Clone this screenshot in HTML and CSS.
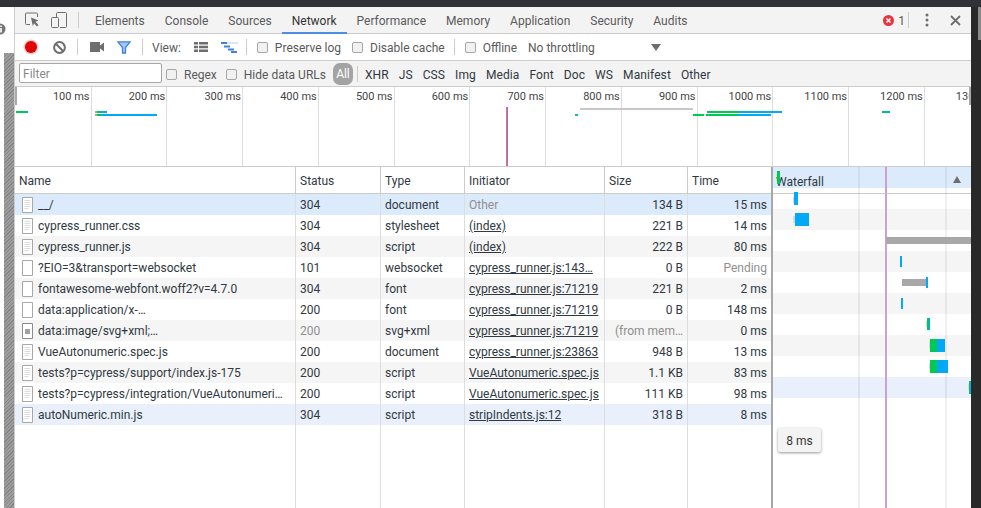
FILE: index.html
```html
<!DOCTYPE html>
<html lang="en">
<head>
<meta charset="utf-8">
<title>DevTools Network</title>
<link rel="stylesheet" href="styles.css">
</head>
<body>
<svg class="defs" width="0" height="0" aria-hidden="true">
  <symbol id="doc" viewBox="0 0 11 16"><path d="M.5.5h10v15H.5z" fill="#fff" stroke="#a8a8a8"/><path d="M2.5 3.5h6M2.5 5.5h6M2.5 7.5h6M2.5 9.5h6M2.5 11.5h4" stroke="#dcdcdc" fill="none"/></symbol>
  <symbol id="blank" viewBox="0 0 11 16"><path d="M.5.5h10v15H.5z" fill="#fff" stroke="#a8a8a8"/></symbol>
  <symbol id="img" viewBox="0 0 11 16"><path d="M.5.5h10v15H.5z" fill="#fff" stroke="#8c8c8c"/><path d="M3 6h5v5H3z" fill="#a0a0a0"/></symbol>
</svg>
<div class="topbar"></div>
<div class="main">
  <aside class="gutter">
    <div class="gutter-top"><svg class="info" width="6" height="12" viewBox="0 0 6 12"><circle cx="0" cy="6" r="5.5" fill="#757575"/><path d="M0 2.5h2v1.5H0zM0 5h2v4.500H0z" fill="#e6e6e6"/></svg></div>
    <div class="hatch"></div>
  </aside>
  <section class="devtools">
    <header class="tabbar">
      <svg class="ico-inspect" width="15" height="16" viewBox="0 0 15 16"><path d="M5 12.500H1.500a1 1 0 0 1-1-1V2a1 1 0 0 1 1-1h10a1 1 0 0 1 1 1v3" fill="none" stroke="#6e6e6e"/><path d="M6 5.500l7.500 3-3 1.300 3 3.200-1.500 1.500-3-3.200-1.200 3z" fill="#6e6e6e"/></svg>
      <svg class="ico-device" width="16" height="16" viewBox="0 0 16 16"><path d="M5.500 5V1.500a1 1 0 0 1 1-1h8a1 1 0 0 1 1 1v13a1 1 0 0 1-1 1H9" fill="none" stroke="#6e6e6e"/><rect x=".5" y="5.500" width="7" height="10" rx="1" fill="none" stroke="#6e6e6e"/></svg>
      <span class="vsep tab-sep"></span>
      <nav class="tabs">
        <a class="tab">Elements</a><a class="tab">Console</a><a class="tab">Sources</a><a class="tab active">Network</a><a class="tab">Performance</a><a class="tab">Memory</a><a class="tab">Application</a><a class="tab">Security</a><a class="tab">Audits</a>
      </nav>
      <div class="tab-end">
        <svg width="11" height="11" viewBox="0 0 11 11"><circle cx="5.500" cy="5.500" r="5.500" fill="#e8343f"/><path d="M3.500 3.500l4 4M7.500 3.500l-4 4" stroke="#fff" stroke-width="1.500"/></svg>
        <span class="err-count">1</span>
        <span class="vsep err-sep"></span>
        <svg class="ico-dots" width="4" height="14" viewBox="0 0 4 14"><circle cx="2" cy="2" r="1.500" fill="#6e6e6e"/><circle cx="2" cy="7" r="1.500" fill="#6e6e6e"/><circle cx="2" cy="12" r="1.500" fill="#6e6e6e"/></svg>
        <svg class="ico-close" width="11" height="11" viewBox="0 0 11 11"><path d="M1 1l9 9M10 1l-9 9" stroke="#6e6e6e" stroke-width="1.800"/></svg>
      </div>
    </header>
    <div class="toolbar">
      <svg class="ico-record" width="16" height="16" viewBox="0 0 16 16"><circle cx="8" cy="8" r="7.500" fill="#f8c9c9"/><circle cx="8" cy="8" r="6" fill="#e00000"/></svg>
      <svg class="ico-clear" width="13" height="13" viewBox="0 0 13 13"><circle cx="6.500" cy="6.500" r="5.400" fill="none" stroke="#6e6e6e" stroke-width="2"/><path d="M2.800 2.800l7.400 7.400" stroke="#6e6e6e" stroke-width="2"/></svg>
      <span class="vsep sep-a"></span>
      <svg class="ico-cam" width="14" height="10" viewBox="0 0 14 10"><path d="M0 0h10v10H0zM10 3.500L14 .5v9l-4-3z" fill="#6e6e6e"/></svg>
      <svg class="ico-filter" width="14" height="13" viewBox="0 0 14 13"><path d="M.8.800h12.400L8.500 6.500V12h-3V6.500z" fill="#a5c8f5" stroke="#3d82e0" stroke-width="1.300"/></svg>
      <span class="vsep sep-b"></span>
      <span class="view-label">View:</span>
      <svg class="ico-list" width="14" height="10" viewBox="0 0 14 10"><path d="M0 0h4v2.500H0zM5 0h9v2.500H5zM0 3.800h4v2.500H0zM5 3.800h9v2.500H5zM0 7.500h4V10H0zM5 7.500h9V10H5z" fill="#6e6e6e"/></svg>
      <svg class="ico-wf" width="17" height="11" viewBox="0 0 17 11"><path d="M0 0h17v2H0z" fill="#dbe7f9"/><path d="M0 0h6v2H0zM3 3.500h6v2H3zM7 6.500h6v2H7zM10 9h6v2h-6z" fill="#3d82e0"/></svg>
      <span class="vsep sep-c"></span>
      <label class="check c-preserve"><input type="checkbox">Preserve log</label>
      <label class="check c-cache"><input type="checkbox">Disable cache</label>
      <span class="vsep sep-d"></span>
      <label class="check c-offline"><input type="checkbox">Offline</label>
      <span class="throttle">No throttling</span>
      <span class="tri-down"></span>
    </div>
    <div class="filterbar">
      <input class="filter-input" type="text" placeholder="Filter">
      <label class="check c-regex"><input type="checkbox">Regex</label>
      <label class="check c-hide"><input type="checkbox">Hide data URLs</label>
      <span class="pill">All</span>
      <span class="vsep sep-e"></span>
      <span class="ftype">XHR</span><span class="ftype">JS</span><span class="ftype">CSS</span><span class="ftype">Img</span><span class="ftype">Media</span><span class="ftype">Font</span><span class="ftype">Doc</span><span class="ftype">WS</span><span class="ftype">Manifest</span><span class="ftype">Other</span>
    </div>
    <div class="overview">
      <div class="tick">100 ms</div><div class="tick">200 ms</div><div class="tick">300 ms</div><div class="tick">400 ms</div><div class="tick">500 ms</div><div class="tick">600 ms</div><div class="tick">700 ms</div><div class="tick">800 ms</div><div class="tick">900 ms</div><div class="tick">1000 ms</div><div class="tick">1100 ms</div><div class="tick">1200 ms</div><div class="tick">1300 ms</div>
      <svg class="ov-canvas" width="956" height="80" viewBox="15 86 956 80">
        <rect x="15" y="86" width="2" height="18" fill="#a8a8a8"/><rect x="969" y="86" width="2" height="18" fill="#a8a8a8"/>
        <rect x="16" y="110" width="11" height="2" fill="#00c853"/><rect x="27" y="110" width="1" height="2" fill="#03a9f4"/>
        <rect x="95" y="110" width="2" height="2" fill="#a8a8a8"/><rect x="97" y="110" width="4" height="2" fill="#00c853"/><rect x="101" y="110" width="6" height="2" fill="#03a9f4"/>
        <rect x="95" y="113" width="2" height="2" fill="#a8a8a8"/><rect x="97" y="113" width="4" height="2" fill="#00c853"/><rect x="101" y="113" width="56" height="2" fill="#03a9f4"/>
        <rect x="506" y="106" width="1" height="60" fill="#f06a6a"/><rect x="507" y="106" width="1" height="60" fill="#8f78d8"/>
        <rect x="575" y="113" width="3" height="2" fill="#00c8a0"/>
        <rect x="580" y="107" width="113" height="2" fill="#c8c8c8"/>
        <rect x="693" y="113" width="11" height="2" fill="#00c853"/>
        <rect x="707" y="110" width="32" height="2" fill="#00c853"/><rect x="739" y="110" width="43" height="2" fill="#03a9f4"/>
        <rect x="706" y="113" width="32" height="2" fill="#00c853"/><rect x="738" y="113" width="33" height="2" fill="#03a9f4"/>
        <rect x="882" y="110" width="5" height="2" fill="#00c853"/><rect x="887" y="110" width="3" height="2" fill="#03a9f4"/>
      </svg>
    </div>
    <div class="table-wrap">
      <div class="table">
        <div class="row head"><div>Name</div><div>Status</div><div>Type</div><div>Initiator</div><div>Size</div><div>Time</div></div>
        <div class="row selected"><div class="name"><svg class="fi"><use href="#doc"/></svg>__/</div><div>304</div><div>document</div><div class="muted">Other</div><div class="num">134 B</div><div class="num">15 ms</div></div>
        <div class="row"><div class="name"><svg class="fi"><use href="#doc"/></svg>cypress_runner.css</div><div>304</div><div>stylesheet</div><div class="link"><u>(index)</u></div><div class="num">221 B</div><div class="num">14 ms</div></div>
        <div class="row alt"><div class="name"><svg class="fi"><use href="#doc"/></svg>cypress_runner.js</div><div>304</div><div>script</div><div class="link"><u>(index)</u></div><div class="num">222 B</div><div class="num">80 ms</div></div>
        <div class="row"><div class="name"><svg class="fi"><use href="#blank"/></svg>?EIO=3&amp;transport=websocket</div><div>101</div><div>websocket</div><div class="link"><u>cypress_runner.js:143…</u></div><div class="num">0 B</div><div class="num muted">Pending</div></div>
        <div class="row alt"><div class="name"><svg class="fi"><use href="#blank"/></svg>fontawesome-webfont.woff2?v=4.7.0</div><div>304</div><div>font</div><div class="link"><u>cypress_runner.js:71219</u></div><div class="num">221 B</div><div class="num">2 ms</div></div>
        <div class="row"><div class="name"><svg class="fi"><use href="#blank"/></svg>data:application/x-…</div><div>200</div><div>font</div><div class="link"><u>cypress_runner.js:71219</u></div><div class="num">0 B</div><div class="num">148 ms</div></div>
        <div class="row alt"><div class="name"><svg class="fi"><use href="#img"/></svg>data:image/svg+xml;…</div><div class="muted">200</div><div>svg+xml</div><div class="link"><u>cypress_runner.js:71219</u></div><div class="num muted">(from mem…</div><div class="num">0 ms</div></div>
        <div class="row"><div class="name"><svg class="fi"><use href="#doc"/></svg>VueAutonumeric.spec.js</div><div>200</div><div>document</div><div class="link"><u>cypress_runner.js:23863</u></div><div class="num">948 B</div><div class="num">13 ms</div></div>
        <div class="row alt"><div class="name"><svg class="fi"><use href="#doc"/></svg>tests?p=cypress/support/index.js-175</div><div>200</div><div>script</div><div class="link"><u>VueAutonumeric.spec.js</u></div><div class="num">1.1 KB</div><div class="num">83 ms</div></div>
        <div class="row"><div class="name"><svg class="fi"><use href="#doc"/></svg>tests?p=cypress/integration/VueAutonumeri…</div><div>200</div><div>script</div><div class="link"><u>VueAutonumeric.spec.js</u></div><div class="num">111 KB</div><div class="num">98 ms</div></div>
        <div class="row hover"><div class="name"><svg class="fi"><use href="#doc"/></svg>autoNumeric.min.js</div><div>304</div><div>script</div><div class="link"><u>stripIndents.js:12</u></div><div class="num">318 B</div><div class="num">8 ms</div></div>
        <div class="row filler"><div></div><div></div><div></div><div></div><div></div><div></div></div>
      </div>
      <div class="waterfall">
        <div class="wf-head">Waterfall<span class="tri-up"></span></div>
        <div class="wf-row"></div>
        <div class="wf-row wf-alt"></div>
        <div class="wf-row"></div>
        <div class="wf-row wf-alt"></div>
        <div class="wf-row"></div>
        <div class="wf-row wf-alt"></div>
        <div class="wf-row"></div>
        <div class="wf-row wf-alt"></div>
        <div class="wf-row"></div>
        <div class="wf-row wf-hover"></div>
        <svg class="wf-canvas" width="198" height="341" viewBox="773 167 198 341">
          <rect x="773" y="193" width="198" height="1" fill="#ccc"/>
          <rect x="858" y="167" width="2" height="341" fill="#000" opacity=".06"/>
          <rect x="945" y="167" width="2" height="341" fill="#000" opacity=".06"/>
          <rect x="885" y="167" width="2" height="341" fill="#c9a3cf"/>
          <rect x="777" y="171" width="3" height="13" fill="#00c853"/>
          <rect x="793" y="197" width="1" height="6" fill="#d8d8d8"/><rect x="794" y="192" width="4" height="13" fill="#03a9f4"/>
          <rect x="793" y="216" width="2" height="7" fill="#d8d8d8"/><rect x="795" y="213" width="14" height="13" fill="#03a9f4"/>
          <rect x="886" y="237" width="85" height="7" fill="#a8a8a8"/>
          <rect x="900" y="256" width="2" height="11" fill="#03a9f4"/>
          <rect x="902" y="279" width="24" height="7" fill="#a8a8a8"/><rect x="926" y="277" width="2" height="11" fill="#03a9f4"/>
          <rect x="901" y="298" width="2" height="11" fill="#03a9f4"/>
          <rect x="926" y="321" width="1" height="6" fill="#d8d8d8"/><rect x="927" y="318" width="2" height="12" fill="#00c853"/><rect x="929" y="318" width="1" height="12" fill="#03a9f4"/>
          <rect x="929" y="342" width="1" height="6" fill="#d8d8d8"/><rect x="930" y="339" width="7" height="13" fill="#00c853"/><rect x="937" y="339" width="8" height="13" fill="#03a9f4"/>
          <rect x="929" y="363" width="1" height="6" fill="#d8d8d8"/><rect x="930" y="360" width="7" height="13" fill="#00c853"/><rect x="937" y="360" width="11" height="13" fill="#03a9f4"/>
          <rect x="968" y="384" width="1" height="6" fill="#d8d8d8"/><rect x="969" y="381" width="1" height="13" fill="#00c853"/><rect x="970" y="381" width="1" height="13" fill="#03a9f4"/>
        </svg>
        <div class="tooltip">8 ms</div>
      </div>
    </div>
  </section>
  <aside class="rightbar"><div class="thumb"></div></aside>
</div>
</body>
</html>
```

FILE: styles.css
```css
* { box-sizing: border-box; }
html, body { margin: 0; height: 100%; }
body {
  width: 981px;
  height: 508px;
  overflow: hidden;
  display: flex;
  flex-direction: column;
  background: #fff;
  color: #303942;
  font: 12px/1 Roboto, "Liberation Sans", sans-serif;
}
.defs { position: absolute; }
.topbar { height: 7px; flex: none; background: #2f3337; }
.main { flex: 1; display: flex; min-height: 0; }

/* left gutter */
.gutter { width: 15px; flex: none; display: flex; flex-direction: column; border-right: 1px solid #ccc; }
.gutter-top { height: 46px; display: flex; padding-top: 16px; align-items: flex-start; }
.hatch {
  flex: 1;
  margin-left: 4px;
  background: repeating-linear-gradient(135deg, #868686 0 1px, #9e9e9e 1px 2.5px);
}

/* right side */
.rightbar { width: 10px; flex: none; background: #292929; padding-left: 7px; }
.thumb { height: 33px; background: #8a8a8a; }

.devtools { flex: 1; min-width: 0; display: flex; flex-direction: column; }
.vsep { width: 1px; height: 16px; background: #ccc; flex: none; }

/* tab bar */
.tabbar {
  height: 27px;
  flex: none;
  display: flex;
  align-items: center;
  background: #f3f3f3;
  border-bottom: 1px solid #ccc;
}
.ico-inspect { margin-left: 10px; }
.ico-device { margin-left: 11px; }
.tab-sep { margin-left: 11px; }
.tabs { display: flex; align-self: stretch; margin-left: 6px; }
.tab { padding: 8px 10px 0; height: 27px; color: #5a5a5a; white-space: nowrap; }
.tab.active { color: #333; border-bottom: 2px solid #4a8ee6; }
.tab-end { margin-left: auto; display: flex; align-items: center; }
.err-count { margin-left: 4px; padding-top: 1px; color: #5a5a5a; }
.err-sep { margin-left: 3px; }
.ico-dots { margin-left: 16px; }
.ico-close { margin-left: 21px; margin-right: 10px; }

/* toolbar */
.toolbar {
  height: 27px;
  flex: none;
  display: flex;
  align-items: center;
  border-bottom: 1px solid #ccc;
  white-space: nowrap;
}
.ico-record { margin-left: 8px; }
.ico-clear { margin-left: 14px; }
.sep-a { margin-left: 11px; }
.ico-cam { margin-left: 12px; }
.ico-filter { margin-left: 13px; }
.sep-b { margin-left: 11px; }
.view-label { margin-left: 9px; padding-top: 2px; color: #5a5a5a; }
.ico-list { margin-left: 13px; }
.ico-wf { margin-left: 13px; }
.sep-c { margin-left: 8px; }
.check { display: inline-flex; align-items: center; padding-top: 2px; color: #5a5a5a; white-space: nowrap; }
.check input {
  appearance: none;
  width: 11px;
  height: 11px;
  margin: -2px 7px 0 0;
  background: #f1f1f1;
  border: 1px solid #a6a6a6;
  border-radius: 2px;
}
.c-preserve { margin-left: 10px; }
.c-cache { margin-left: 11px; }
.sep-d { margin-left: 9px; }
.c-offline { margin-left: 10px; }
.throttle { margin-left: 11px; padding-top: 2px; color: #5a5a5a; }
.tri-down {
  margin-left: 56px;
  width: 0;
  height: 0;
  border-left: 5px solid transparent;
  border-right: 5px solid transparent;
  border-top: 7px solid #6e6e6e;
}

/* filter bar */
.filterbar {
  height: 25px;
  flex: none;
  display: flex;
  align-items: center;
  padding-top: 1px;
  background: #f3f3f3;
  white-space: nowrap;
}
.filter-input {
  width: 143px;
  height: 20px;
  margin: -2px 0 0 4px;
  padding: 1px 3px 0;
  background: #fff;
  border: 1px solid #a6a6a6;
  border-radius: 2px;
  font: inherit;
  outline: none;
}
.filter-input::placeholder { color: #8a8a8a; opacity: 1; }
.c-regex { margin-left: 4px; }
.c-hide { margin-left: 9px; }
.pill {
  margin-left: 7px;
  width: 20px;
  height: 22px;
  line-height: 23px;
  text-align: center;
  color: #fff;
  background: #a3a3a3;
  border-radius: 7px;
}
.sep-e { margin-left: 4px; }
.ftype { margin-left: 10px; padding-top: 1px; letter-spacing: .1px; color: #303942; }
.sep-e + .ftype { margin-left: 7px; }

/* overview */
.overview {
  position: relative;
  height: 81px;
  flex: none;
  display: flex;
  padding-left: .8px;
  overflow: hidden;
  border-top: 1px solid #ccc;
  border-bottom: 1px solid #ccc;
}
.tick {
  flex: 0 0 75.75px;
  border-right: 1px solid #ddd;
  padding: 4px 1px 0 0;
  text-align: right;
  font-size: 11px;
  white-space: nowrap;
  color: #444;
}
.ov-canvas { position: absolute; left: 0; top: 0; }

/* table */
.table-wrap { flex: 1; min-height: 0; display: flex; }
.table { width: 756px; flex: none; display: flex; flex-direction: column; }
.row {
  display: grid;
  grid-template-columns: 280px 85px 84px 140px 83px 84px;
  height: 21px;
  flex: none;
}
.row > div {
  padding: 1px 4px 0;
  display: flex;
  align-items: center;
  white-space: nowrap;
  overflow: hidden;
  border-left: 1px solid #ddd;
}
.row > div:first-child { border-left: 0; }
.row.head { height: 27px; border-bottom: 1px solid #ccc; }
.row.head > div { padding-top: 2px; border-left-color: #ccc; }
.row.alt { background: #f5f5f5; }
.row.selected { background: #dcebfb; }
.row.hover { background: #e9f0fb; }
.row.filler { flex: 1; height: auto; }
.name { gap: 5px; padding-left: 7px !important; }
.fi { width: 11px; height: 16px; flex: none; margin-top: -1px; }
.num { justify-content: flex-end; }
.muted { color: #8f8f8f; }
.link u { text-underline-offset: 1px; }

/* waterfall */
.waterfall {
  position: relative;
  flex: 1;
  min-width: 0;
  border-left: 2px solid #a8a8a8;
  overflow: hidden;
}
.wf-head {
  height: 21px;
  display: flex;
  align-items: center;
  justify-content: space-between;
  padding: 8px 10px 0 3px;
  background: #dcebfb;
  color: #303942;
}
.tri-up {
  width: 0;
  height: 0;
  margin-top: -5px;
  border-left: 4.5px solid transparent;
  border-right: 4.5px solid transparent;
  border-bottom: 7px solid #6e6e6e;
}
.wf-row { height: 21px; }
.wf-alt { background: #f5f5f5; }
.wf-hover { background: #e9f0fb; }
.wf-canvas { position: absolute; left: 0; top: 0; }
.tooltip {
  position: absolute;
  left: 5px;
  top: 261px;
  width: 43px;
  height: 24px;
  line-height: 26px;
  text-align: center;
  background: #f3f3f3;
  border-radius: 2px;
  box-shadow: 0 1px 3px rgba(0, 0, 0, .4);
  color: #333;
}
```
